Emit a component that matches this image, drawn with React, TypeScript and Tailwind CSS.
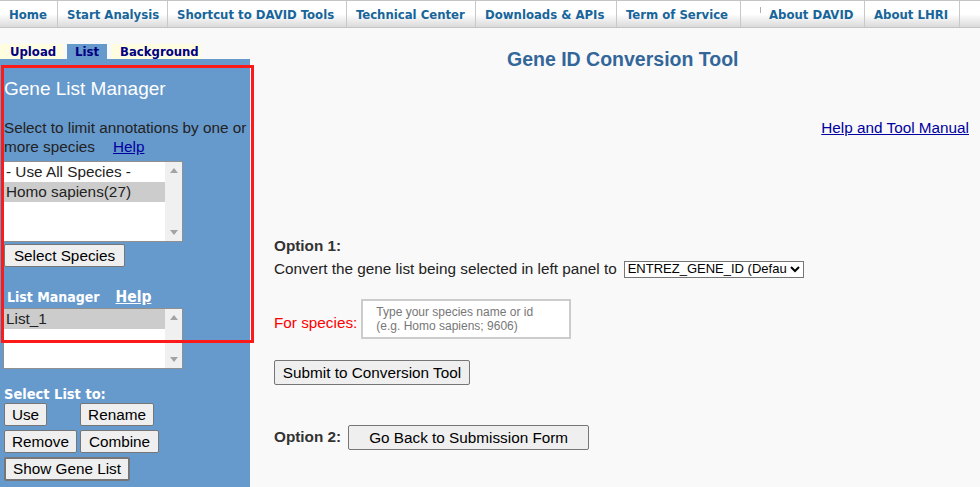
import React from "react";

const navItems: { label: string; w: string; pl: string }[] = [
  { label: "Home", w: "w-[58px]", pl: "pl-[9px]" },
  { label: "Start Analysis", w: "w-[110px]", pl: "pl-[9px]" },
  { label: "Shortcut to DAVID Tools", w: "w-[179px]", pl: "pl-[9px]" },
  { label: "Technical Center", w: "w-[129px]", pl: "pl-[9px]" },
  { label: "Downloads & APIs", w: "w-[141px]", pl: "pl-[9px]" },
  { label: "Term of Service", w: "w-[124px]", pl: "pl-[9px]" },
  { label: "About DAVID", w: "w-[124px]", pl: "pl-[28px]" },
  { label: "About LHRI", w: "w-[95px]", pl: "pl-[9px]" },
];

const arial = "font-['Liberation_Sans',Arial,sans-serif]";
const tahoma = "font-['DejaVu_Sans_Condensed','DejaVu_Sans',sans-serif]";

function Btn({ children, className = "" }: { children: React.ReactNode; className?: string }) {
  return (
    <button
      className={`${arial} flex h-[23px] items-center justify-center whitespace-nowrap rounded-[2px] border border-[#767676] bg-[#efefef] px-[6px] text-[15.3px] leading-none text-black ${className}`}
    >
      {children}
    </button>
  );
}

function ListBox({ items, h }: { items: { t: string; sel?: boolean }[]; h: string }) {
  return (
    <div className={`flex w-[180px] ${h} border border-[#8f8f8f] bg-white`}>
      <div className="flex-1">
        {items.map((it) => (
          <div
            key={it.t}
            className={`${arial} h-[20px] whitespace-nowrap pl-[2px] text-[15.3px] leading-[20px] text-[#222] ${it.sel ? "bg-[#cccccc]" : ""}`}
          >
            {it.t}
          </div>
        ))}
      </div>
      <div className="flex w-[17px] flex-col items-center justify-between bg-[#f0f0f0] py-[6px]">
        <svg width="8" height="5" viewBox="0 0 8 5">
          <path d="M0 5 L4 0 L8 5 Z" fill="#a3a3a3" />
        </svg>
        <svg width="8" height="5" viewBox="0 0 8 5">
          <path d="M0 0 L4 5 L8 0 Z" fill="#a3a3a3" />
        </svg>
      </div>
    </div>
  );
}

export default function App() {
  return (
    <div className={`relative h-[487px] w-[980px] overflow-hidden bg-[#f9f9f9] ${arial}`}>
      {/* Nav */}
      <div className="flex h-[28px] border-y border-[#c4c4c4] bg-gradient-to-b from-white via-white to-[#dadada]">
        {navItems.map((n, i) => (
          <div
            key={n.label}
            className={`${n.w} ${n.pl} relative flex h-full items-center whitespace-nowrap border-r border-[#c8c8c8] pt-[1px] ${tahoma} text-[13px] font-bold text-[#17659a]`}
          >
            {n.label}
            {i === 6 && <span className="absolute left-[19px] top-[6px] h-[6px] w-px bg-[#b0b0b0]" />}
          </div>
        ))}
        <div className="flex-1" />
      </div>

      <div className="flex">
        {/* Left column */}
        <div className="w-[250px] shrink-0 pt-[16px]">
          <div className={`flex h-[16px] items-end gap-[4px] border-b border-[#6699cc] ${tahoma} text-[13px] font-bold leading-[15px] text-[#000080]`}>
            <div className="w-[63px] bg-[#fffde0] pl-[10px]">Upload</div>
            <div className="w-[40px] bg-[#6699cc] pl-[8px]">List</div>
            <div className="ml-[1px] w-[89px] bg-[#fffde0] pl-[8px]">Background</div>
          </div>
          <div className="h-[430px] bg-[#6699cc] pl-[3px] pt-[19px]">
            <div className="pl-[1px] text-[19px] leading-[20px] text-white">Gene List Manager</div>
            <div className="mt-[19px] pl-[1px] text-[15.3px] leading-[19px] text-[#222]">
              Select to limit annotations by one or
              <br />
              more species
              <span className="ml-[18px] text-[#0000a0] underline">Help</span>
            </div>
            <div className="mt-[5px]">
              <ListBox h="h-[81px]" items={[{ t: "- Use All Species -" }, { t: "Homo sapiens(27)", sel: true }]} />
            </div>
            <Btn className="ml-[1px] mt-[2px] w-[121px]">Select Species</Btn>
            <div className={`mt-[21px] flex items-end pl-[4px] text-white ${tahoma} font-bold`}>
              <span className="text-[14px] leading-[18px]">List Manager</span>
              <span className="ml-[16px] text-[15.5px] leading-[18px] underline">Help</span>
            </div>
            <div className="mt-[2px]">
              <ListBox h="h-[61px]" items={[{ t: "List_1", sel: true }]} />
            </div>
            <div className={`mt-[16px] pl-[1px] text-[14.5px] font-bold leading-[18px] text-white ${tahoma}`}>Select List to:</div>
            <div className="mt-[0px] flex flex-col gap-[4px] pl-[1px]">
              <div className="flex">
                <Btn className="w-[43px]">Use</Btn>
                <Btn className="ml-[33px] w-[74px]">Rename</Btn>
              </div>
              <div className="flex">
                <Btn className="w-[73px]">Remove</Btn>
                <Btn className="ml-[3px] w-[79px]">Combine</Btn>
              </div>
              <div className="flex">
                <Btn className="h-[24px] w-[126px] border-2 border-[#1a1a1a]">Show Gene List</Btn>
              </div>
            </div>
          </div>
        </div>

        {/* Right column */}
        <div className="flex-1 pl-[24px]">
          <div className="mt-[17px] pl-[233px]">
            <span className="text-[19.5px] font-bold text-[#336699]">Gene ID Conversion Tool</span>
          </div>
          <div className="mt-[43px] pr-[11px] text-right text-[15.3px] text-[#0000a0] underline">Help and Tool Manual</div>
          <div className="mt-[96px] text-[15.3px] font-bold leading-[20px] text-[#333]">Option 1:</div>
          <div className="mt-[3px] flex items-center text-[15.3px] leading-[20px] text-[#222]">
            Convert the gene list being selected in left panel to
            <div className="ml-[7px] flex h-[17px] w-[180px] items-center justify-between border border-[#767676] bg-white pl-[3px] pr-[3px] text-[13px] text-black">
              <span className="overflow-hidden whitespace-nowrap">ENTREZ_GENE_ID (Defau</span>
              <svg width="10" height="7" viewBox="0 0 10 7" className="shrink-0">
                <path d="M1 1 L5 5 L9 1" stroke="#000" strokeWidth="2" fill="none" />
              </svg>
            </div>
          </div>
          <div className="mt-[20px] flex items-center">
            <span className="mt-[8px] text-[15.3px] text-[#ff0000]">For species:</span>
            <div className="ml-[4px] flex h-[40px] w-[210px] flex-col justify-center border-2 border-[#cccccc] bg-white pl-[13px] text-[12px] leading-[14px] text-[#777]">
              <span>Type your species name or id</span>
              <span>(e.g. Homo sapiens; 9606)</span>
            </div>
          </div>
          <Btn className="mt-[21px] h-[25px] w-[196px]">Submit to Conversion Tool</Btn>
          <div className="mt-[40px] flex items-center">
            <span className="text-[15.3px] font-bold text-[#333]">Option 2:</span>
            <Btn className="ml-[7px] h-[25px] w-[241px]">Go Back to Submission Form</Btn>
          </div>
        </div>
      </div>

      {/* red annotation rectangle */}
      <div className="pointer-events-none absolute left-[1px] top-[65px] h-[278px] w-[253px] border-[3px] border-[#ff1a1a]" />
    </div>
  );
}
